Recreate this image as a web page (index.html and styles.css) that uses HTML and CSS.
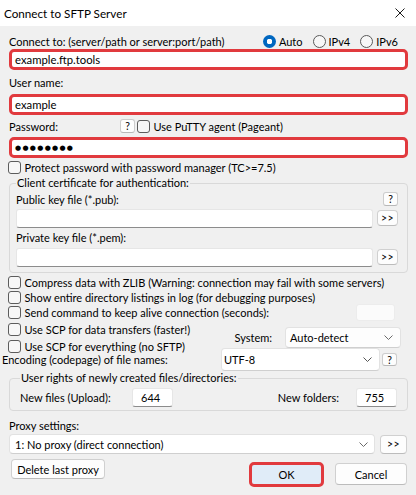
FILE: index.html
```html
<!DOCTYPE html>
<html lang="en">
<head>
<meta charset="utf-8">
<title>Connect to SFTP Server</title>
<link rel="stylesheet" href="styles.css">
</head>
<body>
<div class="win">
  <div class="titlebar">
    <span class="title">Connect to SFTP Server</span>
    <svg class="close" viewBox="0 0 10 10" width="10" height="10"><path d="M0.5 0.5L9.5 9.5M9.5 0.5L0.5 9.5" stroke="#1a1a1a" stroke-width="1" fill="none"/></svg>
  </div>
  <div class="main">
    <div class="row r-connect">
      <span>Connect to: (server/path or server:port/path)</span>
      <div class="radios">
        <span class="radio"><span class="rdot on"></span>Auto</span>
        <span class="radio"><span class="rdot"></span>IPv4</span>
        <span class="radio"><span class="rdot"></span>IPv6</span>
      </div>
    </div>
    <div class="hl field">example.ftp.tools</div>
    <div class="row lbl">User name:</div>
    <div class="hl field">example</div>
    <div class="row r-pass">
      <span class="plabel">Password:</span>
      <span class="qbtn">?</span>
      <span class="cb"></span>
      <span>Use PuTTY agent (Pageant)</span>
    </div>
    <div class="hl field pw"><span class="dots">●●●●●●●●</span></div>
    <div class="row cbrow r-protect"><span class="cb"></span>Protect password with password manager (TC&gt;=7.5)</div>

    <fieldset class="group g-cert">
      <legend>Client certificate for authentication:</legend>
      <div class="row g-ra">Public key file (*.pub):<span class="qbtn push">?</span></div>
      <div class="row g-rb"><span class="tb grow"></span><span class="btn gg">&gt;&gt;</span></div>
      <div class="row g-rc">Private key file (*.pem):</div>
      <div class="row g-rd"><span class="tb grow"></span><span class="btn gg">&gt;&gt;</span></div>
    </fieldset>

    <div class="row cbrow r-c1"><span class="cb"></span>Compress data with ZLIB (Warning: connection may fail with some servers)</div>
    <div class="row cbrow r-c2"><span class="cb"></span>Show entire directory listings in log (for debugging purposes)</div>
    <div class="row cbrow r-c3"><span class="cb"></span>Send command to keep alive connection (seconds):<span class="keep"></span></div>
    <div class="row r-scp">
      <div class="scp-left">
        <div class="row cbrow r-c4"><span class="cb"></span>Use SCP for data transfers (faster!)</div>
        <div class="row cbrow r-c5"><span class="cb"></span>Use SCP for everything (no SFTP)</div>
      </div>
      <span class="syslabel">System:</span>
      <span class="sel sys">Auto-detect<svg class="chev" viewBox="0 0 9 5" width="9" height="5"><polyline points="0.5,0.5 4.5,4.5 8.5,0.5" fill="none" stroke="#6a6a6a" stroke-width="1"/></svg></span>
    </div>
    <div class="row r-enc">
      <span class="enclabel">Encoding (codepage) of file names:</span>
      <span class="hl sel utf">UTF-8<svg class="chev" viewBox="0 0 9 5" width="9" height="5"><polyline points="0.5,0.5 4.5,4.5 8.5,0.5" fill="none" stroke="#555" stroke-width="1"/></svg></span>
      <span class="qbtn encq">?</span>
    </div>

    <fieldset class="group g-rights">
      <legend>User rights of newly created files/directories:</legend>
      <div class="row g-r1">
        <span class="nflabel">New files (Upload):</span>
        <span class="tb num">644</span>
        <span class="nfolder">New folders:</span>
        <span class="tb num num2">755</span>
      </div>
    </fieldset>

    <div class="row r-proxylbl">Proxy settings:</div>
    <div class="row r-proxy">
      <span class="sel proxy">1: No proxy (direct connection)<svg class="chev" viewBox="0 0 9 5" width="9" height="5"><polyline points="0.5,0.5 4.5,4.5 8.5,0.5" fill="none" stroke="#6a6a6a" stroke-width="1"/></svg></span>
      <span class="btn pbtn">&gt;&gt;</span>
    </div>
    <div class="row r-bottom">
      <span class="btn del">Delete last proxy</span>
      <span class="btn ok">OK</span>
      <span class="btn cancel">Cancel</span>
    </div>
  </div>
</div>
</body>
</html>
```

FILE: styles.css
```css
* { box-sizing: border-box; }
html, body { margin: 0; padding: 0; }
body {
  width: 416px;
  height: 495px;
  overflow: hidden;
  background: #f0f0f0;
  font-family: Lato, "Liberation Sans", sans-serif;
  font-size: 11px;
  color: #000;
}
.win { width: 416px; height: 495px; background: #f0f0f0; }

.titlebar {
  height: 26px;
  background: #fff;
  display: flex;
  align-items: center;
  justify-content: space-between;
  padding: 0 11px 0 4px;
}
.title { font-size: 11.7px; }
.close { display: block; }

.main {
  padding: 7px 8px 0 9px;
  display: flex;
  flex-direction: column;
}
.row { display: flex; align-items: center; white-space: nowrap; }

.r-connect { height: 16px; }
.radios { margin-left: auto; margin-right: 10px; display: flex; align-items: center; }
.radio { display: flex; align-items: center; margin-left: 10px; }
.rdot {
  width: 13px; height: 13px; border-radius: 50%;
  border: 1px solid #5a5a5a; background: #f7f7f7;
  margin-right: 3px; flex: none;
}
.rdot.on {
  border: none;
  background: radial-gradient(circle, #fff 0 2.6px, #0067c0 3px);
}

.hl {
  border: 3px solid #e13a3e;
  border-radius: 5px;
  background: #fff;
}
.field {
  height: 21px;
  padding-left: 3px;
  display: flex;
  align-items: center;
  font-size: 11.3px;
}
.lbl { height: 24px; }
.r-pass { height: 22px; }
.plabel { width: 111px; flex: none; }
.qbtn {
  width: 15px; height: 14px;
  border: 1px solid #cdcdcd; border-bottom-color: #b8b8b8;
  border-radius: 3px; background: #fdfdfd;
  font-size: 10.5px; line-height: 12px; text-align: center;
  flex: none;
}
.r-pass .qbtn { margin-right: 2px; }
.pw .dots {
  font-family: "DejaVu Sans", sans-serif;
  font-size: 7px;
  letter-spacing: 1.3px;
}

.cbrow { margin-left: -1px; }
.cb {
  width: 13px; height: 13px;
  border: 1px solid #5c5c5c; border-radius: 3px;
  background: #f7f7f7;
  margin-right: 3.5px; flex: none;
}
.r-protect { height: 18px; }

.group {
  margin: 0;
  min-width: 0;
  border: 1px solid #d9d9d9;
  border-radius: 4px;
}
.group legend { padding: 0 1px; line-height: 14px; }
.g-cert { padding: 0 9px 5px 6px; }
.g-ra { height: 18px; }
.g-rb { height: 20px; }
.g-rc { height: 19px; }
.g-rd { height: 20px; }
.push { margin-left: auto; }
.grow { flex: 1; }
.tb {
  height: 19px;
  background: #fff;
  border: 1px solid #e6e6e6;
  border-bottom-color: #8c8c8c;
  border-radius: 3px;
}
.btn {
  background: #fdfdfd;
  border: 1px solid #d0d0d0;
  border-bottom-color: #bcbcbc;
  border-radius: 4px;
  display: flex; align-items: center; justify-content: center;
  flex: none;
}
.gg { width: 21px; height: 16px; margin-left: 4px; font-size: 10.5px; letter-spacing: 0.5px; }

.r-c1 { height: 15px; margin-top: 2px; }
.r-c2 { height: 14px; }
.r-c3 { height: 17px; }
.keep {
  margin-left: auto; margin-right: 13px;
  width: 39px; height: 17px;
  background: #fbfbfb; border: 1px solid #ececec; border-radius: 3px;
}
.r-scp { height: 33px; }
.scp-left { flex: 1; display: flex; flex-direction: column; }
.r-c4 { height: 17px; }
.r-c5 { height: 16px; }
.syslabel { margin-right: 13px; }
.sel {
  display: flex; align-items: center;
  background: #fdfdfd;
  border: 1px solid #e2e2e2;
  border-bottom-color: #cfcfcf;
  border-radius: 4px;
  flex: none;
}
.chev { margin-left: auto; display: block; }
.sys { width: 116px; height: 21px; padding: 0 7px 0 4px; margin-right: 7px; }

.r-enc { height: 23px; margin-top: -6px; }
.enclabel { margin-left: -7px; }
.utf { margin-left: auto; width: 159px; height: 23px; padding: 0 7px 0 2px; background: #fff; }
.encq { margin-left: 2px; margin-right: 11px; height: 13px; }

.g-rights { padding: 1px 10px 2px 10px; }
.g-r1 { height: 22px; }
.nflabel { width: 112px; flex: none; }
.num { width: 41px; height: 19px; display: flex; align-items: center; padding-left: 8px; flex: none; }
.nfolder { margin-left: auto; margin-right: 17px; }

.r-proxylbl { height: 17px; margin-top: 6px; }
.r-proxy { height: 20px; }
.proxy { width: 366px; height: 20px; padding: 0 6px 0 5px; background: #fff; }
.pbtn { margin-left: auto; margin-right: 1px; width: 27px; height: 19px; font-size: 10.5px; letter-spacing: 0.5px; }

.r-bottom { align-items: flex-start; margin-top: 5px; }
.del { margin-left: 2px; width: 94px; height: 20px; }
.ok {
  margin-left: auto; margin-top: 3px;
  width: 75px; height: 25px;
  border: 3px solid #e13a3e; border-radius: 5px;
  background: #e0ecf8;
}
.cancel { margin-left: 11px; margin-right: 1px; margin-top: 4px; width: 72px; height: 22px; }
```
